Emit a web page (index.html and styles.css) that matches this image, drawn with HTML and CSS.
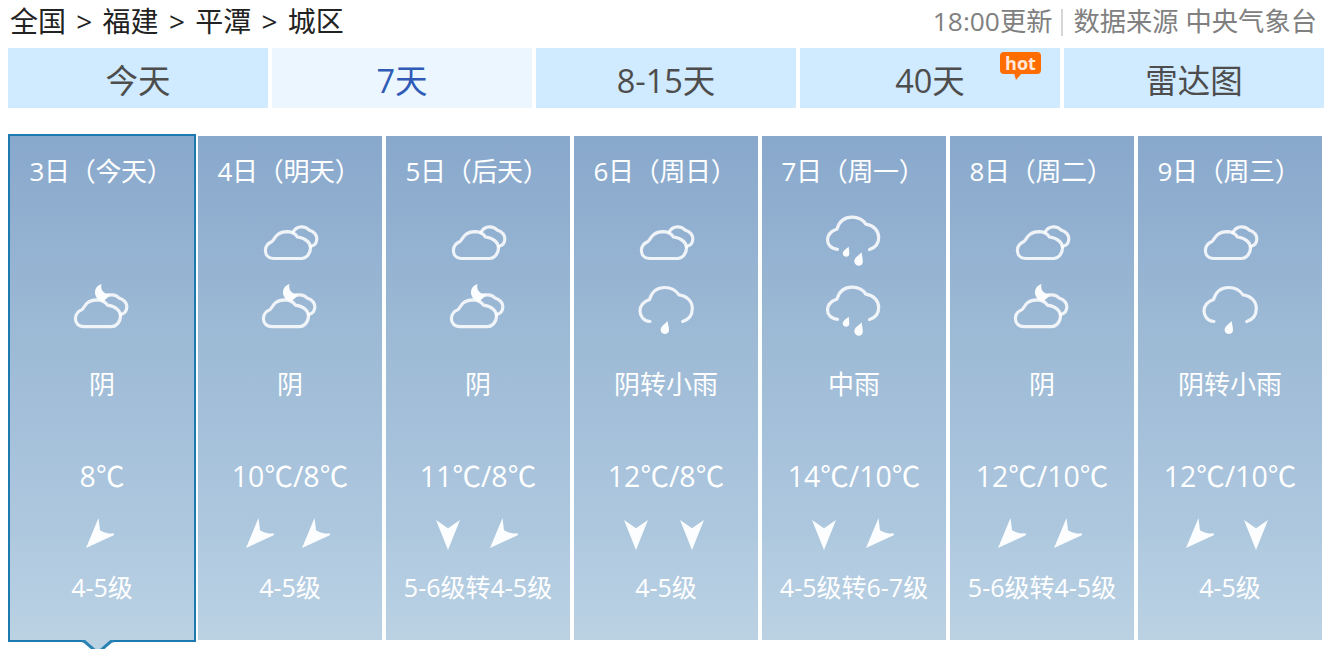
FILE: index.html
```
<!DOCTYPE html>
<html lang="zh-CN">

<head>
    <meta charset="UTF-8">
    <meta name="viewport" content="width=device-width, initial-scale=1.0">
    <title>平潭天气预报</title>
    <link rel="stylesheet" href="styles.css">
</head>

<body>
    <!-- icon symbols -->
    <svg class="defs" width="0" height="0">
        <symbol id="cloud" viewBox="0 0 60 60">
            <path class="line" d="M14 44.5C8 44.5 5.4 40.5 5.4 36.5C5.4 31.5 8.5 29 12 27.5C14.5 26 15 18 27 17.7C32 17.7 35 19.5 37.5 23C46 24 50.5 29 50.5 34C50.5 40 46 44.5 41.5 44.5Z" />
            <path class="line" d="M33 18.2C35 14.5 38 12.8 41.5 12.8C45 12.8 47.5 14 49 16C54 17.7 56.8 20.7 56.8 25C56.8 29 55 31.5 50.5 32.5" />
        </symbol>
        <symbol id="night" viewBox="0 0 60 60">
            <path class="line" d="M12 42.6C6 42.6 3.4 38.6 3.4 34.6C3.4 29.6 6.5 27.1 10 25.6C12.5 24.1 13 16.1 25 15.8C30 15.8 33 17.6 35.5 21.1C44 22.1 48.5 27.1 48.5 32.1C48.5 38.1 44 42.6 39.5 42.6Z" />
            <path class="line" d="M31 16.3C33 12.6 36 10.9 39.5 10.9C43 10.9 45.5 12.1 47 14.1C52 15.8 54.8 18.8 54.8 23.1C54.8 27.1 53 29.6 48.5 30.6" />
            <path class="fill" d="M29.5 0C24.5 1.5 22 6 23.4 11C24.8 15 27 16.2 30 17C34 16 36.5 12 38.5 9.3C32.5 10.8 28 6.5 29.5 0Z" />
        </symbol>
        <symbol id="rain1" viewBox="0 0 60 60">
            <path class="line" d="M14 37.5C7.5 37 4 32 4 27C4 21 8 17.5 13.5 15.5C16 7 21.5 3.5 29 3.5C35.5 3.5 40 6.5 43 10.8C51.5 12 56.3 17.5 56.3 24.5C56.3 31 53 35.5 46.7 37.5" />
            <path class="fill" d="M31.5 37C29 40 24.6 42.2 24.6 46.2C25 51.2 33 51.2 33 46.2C33 43 32 40 31.5 37Z" />
        </symbol>
        <symbol id="rain2" viewBox="0 0 60 60">
            <path class="line" d="M13.5 35.3C7 35 3.5 30.5 3.5 26C3.5 20.5 7.5 17 13 15C15.5 6.5 21 3.2 28.3 3.2C34.5 3.2 39 6 42 10.2C50 11.5 54.7 17 54.7 23.5C54.7 29.5 51.5 33.7 45.5 35.5" />
            <path class="fill" d="M24.6 32.5C22.5 35 18.7 36.6 18.7 39.5C19 43.8 25.3 43.8 25.3 39.8C25.3 37 24.9 35 24.6 32.5Z" />
            <path class="fill" d="M37.6 38.2C35 41.5 30.3 43.2 30.3 47.5C30.7 53 38.8 53 38.8 47.7C38.8 44.3 38 41.5 37.6 38.2Z" />
        </symbol>
        <symbol id="wind-s" viewBox="0 0 40 40">
            <path class="fill" d="M8 6L20 14.3L32 6L20 36Z" />
        </symbol>
        <symbol id="wind-sw" viewBox="0 0 40 40">
            <path class="fill" d="M18.5 4L20 16.2Q26 20 34 19.5C34.5 21 33 22 31 22.5L6 34Z" />
        </symbol>
    </svg>

    <div class="header">
        <div class="crumbs">
            <a>全国</a><span>&gt;</span><a>福建</a><span>&gt;</span><a>平潭</a><span>&gt;</span><a>城区</a>
        </div>
        <div class="source"><span>18:00更新</span><i></i><span>数据来源 中央气象台</span></div>
    </div>

    <div class="tabs">
        <div class="tab">今天</div>
        <div class="tab active">7天</div>
        <div class="tab">8-15天</div>
        <div class="tab">40天<span class="hot">hot</span></div>
        <div class="tab">雷达图</div>
    </div>

    <div class="days">
        <div class="day on">
            <div class="date">3日（今天）</div>
            <div class="icons">
                <svg></svg>
                <svg><use href="#night" /></svg>
            </div>
            <div class="wea">阴</div>
            <div class="tem">8℃</div>
            <div class="win"><svg><use href="#wind-sw" /></svg></div>
            <div class="level">4-5级</div>
            <svg class="pointer" viewBox="0 0 32 14">
                <path d="M1 0L15.7 13L30.4 0Z" class="pointer-bg" />
                <path d="M0 1H2L15.7 13L29.4 1H32" class="pointer-line" />
            </svg>
        </div>
        <div class="day">
            <div class="date">4日（明天）</div>
            <div class="icons">
                <svg><use href="#cloud" /></svg>
                <svg><use href="#night" /></svg>
            </div>
            <div class="wea">阴</div>
            <div class="tem">10℃/8℃</div>
            <div class="win">
                <svg><use href="#wind-sw" /></svg>
                <svg><use href="#wind-sw" /></svg>
            </div>
            <div class="level">4-5级</div>
        </div>
        <div class="day">
            <div class="date">5日（后天）</div>
            <div class="icons">
                <svg><use href="#cloud" /></svg>
                <svg><use href="#night" /></svg>
            </div>
            <div class="wea">阴</div>
            <div class="tem">11℃/8℃</div>
            <div class="win">
                <svg><use href="#wind-s" /></svg>
                <svg><use href="#wind-sw" /></svg>
            </div>
            <div class="level">5-6级转4-5级</div>
        </div>
        <div class="day">
            <div class="date">6日（周日）</div>
            <div class="icons">
                <svg><use href="#cloud" /></svg>
                <svg><use href="#rain1" /></svg>
            </div>
            <div class="wea">阴转小雨</div>
            <div class="tem">12℃/8℃</div>
            <div class="win">
                <svg><use href="#wind-s" /></svg>
                <svg><use href="#wind-s" /></svg>
            </div>
            <div class="level">4-5级</div>
        </div>
        <div class="day">
            <div class="date">7日（周一）</div>
            <div class="icons">
                <svg><use href="#rain2" /></svg>
                <svg><use href="#rain2" /></svg>
            </div>
            <div class="wea">中雨</div>
            <div class="tem">14℃/10℃</div>
            <div class="win">
                <svg><use href="#wind-s" /></svg>
                <svg><use href="#wind-sw" /></svg>
            </div>
            <div class="level">4-5级转6-7级</div>
        </div>
        <div class="day">
            <div class="date">8日（周二）</div>
            <div class="icons">
                <svg><use href="#cloud" /></svg>
                <svg><use href="#night" /></svg>
            </div>
            <div class="wea">阴</div>
            <div class="tem">12℃/10℃</div>
            <div class="win">
                <svg><use href="#wind-sw" /></svg>
                <svg><use href="#wind-sw" /></svg>
            </div>
            <div class="level">5-6级转4-5级</div>
        </div>
        <div class="day">
            <div class="date">9日（周三）</div>
            <div class="icons">
                <svg><use href="#cloud" /></svg>
                <svg><use href="#rain1" /></svg>
            </div>
            <div class="wea">阴转小雨</div>
            <div class="tem">12℃/10℃</div>
            <div class="win">
                <svg><use href="#wind-sw" /></svg>
                <svg><use href="#wind-s" /></svg>
            </div>
            <div class="level">4-5级</div>
        </div>
    </div>
</body>

</html>
```
FILE: styles.css
```
* {
    box-sizing: border-box;
    padding: 0;
    margin: 0;
}

html {
    overflow: hidden;
}

body {
    height: 649px;
    padding: 0 6px 0 8px;
    overflow: hidden;
    background: #fff;
    font-family: "Open Sans", "Noto Sans CJK SC", sans-serif;
}

.defs {
    position: absolute;
}

.header {
    height: 48px;
    display: flex;
    justify-content: space-between;
    white-space: nowrap;
}

.crumbs {
    display: flex;
    padding-left: 2px;
    font-size: 28px;
    line-height: 42px;
    color: #222;
}

.crumbs span {
    width: 36.6px;
    text-align: center;
}

.source {
    display: flex;
    align-items: flex-start;
    padding-right: 7px;
    font-size: 26.3px;
    line-height: 42px;
    color: #808080;
}

.source i {
    width: 2px;
    height: 27px;
    margin: 9px 10px 0 9px;
    background: #d6d6d6;
}

.tabs {
    display: flex;
    gap: 4px;
    height: 60px;
}

.tab {
    position: relative;
    width: 260px;
    font-size: 32.5px;
    line-height: 66px;
    text-align: center;
    color: #4d4d4d;
    background: #d0eaff;
}

.tab.active {
    color: #2f5bb7;
    background: #ebf6ff;
}

.hot {
    position: absolute;
    left: 200px;
    top: 4px;
    width: 41px;
    height: 22px;
    border-radius: 4px;
    background: #ff6c00;
    color: #ffe9dc;
    font-size: 18px;
    font-weight: bold;
    line-height: 22px;
}

.hot::after {
    content: "";
    position: absolute;
    left: 14px;
    top: 21px;
    border-left: 2px solid transparent;
    border-right: 6px solid transparent;
    border-top: 7px solid #ff6c00;
}

.days {
    display: flex;
    gap: 4px;
    margin-top: 28px;
    padding-left: 2px;
}

.day {
    position: relative;
    width: 184px;
    height: 504px;
    text-align: center;
    white-space: nowrap;
    color: #fff;
    background: linear-gradient(#88a8cc 0%, #9cb9d5 38%, #a6c1da 61%, #adc8de 79%, #b3cbe0 84%, #b6cee2 92%, #bbd2e3 100%);
}

.day.on {
    box-shadow: 0 0 0 2px #1c7ab0;
}

.date {
    height: 78px;
    padding-right: 2px;
    font-size: 26px;
    line-height: 70px;
    letter-spacing: -0.3px;
}

.icons {
    display: flex;
    flex-direction: column;
    align-items: center;
    gap: 10px;
}

.icons svg {
    width: 60px;
    height: 60px;
}

.line {
    fill: none;
    stroke: #fff;
    stroke-width: 3.2;
    stroke-linecap: round;
    stroke-linejoin: round;
    opacity: .85;
}

.fill {
    fill: #fff;
    opacity: .96;
}

.wea {
    margin-top: 20px;
    font-size: 26px;
    line-height: 40px;
}

.tem {
    margin-top: 52px;
    font-size: 28.5px;
    line-height: 40px;
}

.win {
    display: flex;
    justify-content: center;
    gap: 16px;
    margin-top: 18px;
    padding-right: 4px;
}

.win svg {
    width: 40px;
    height: 40px;
}

.level {
    margin-top: 13px;
    font-size: 25px;
    line-height: 40px;
}

.pointer {
    position: absolute;
    left: 72px;
    top: 504px;
    width: 32px;
    height: 14px;
}

.pointer-bg {
    fill: #bbd2e3;
}

.pointer-line {
    fill: none;
    stroke: #2b82b5;
    stroke-width: 3;
}
```
